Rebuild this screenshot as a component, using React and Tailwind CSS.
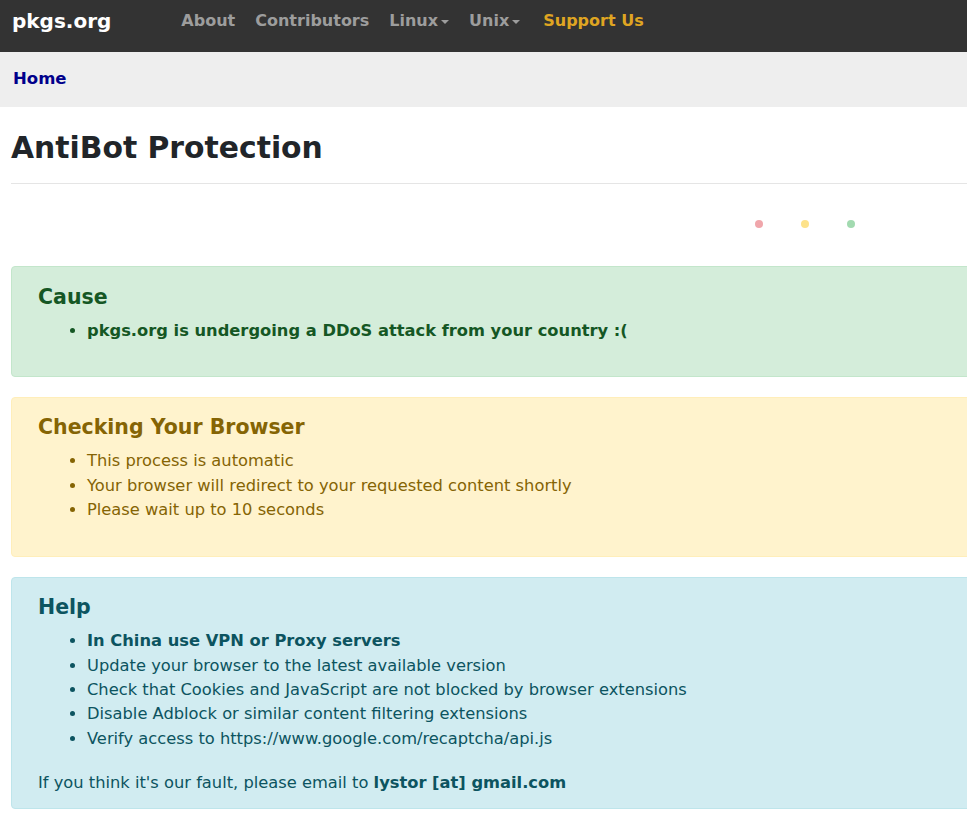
import React from "react";

const font = { fontFamily: '"DejaVu Sans", Verdana, Tahoma, sans-serif' };

function Caret() {
  return <span className="ml-[3px] inline-block border-x-[4px] border-t-[4px] border-x-transparent border-t-current align-middle" />;
}

function Dots() {
  return (
    <div className="flex h-[82px] items-center gap-[38px] pb-[2px] pl-[744px]">
      <span className="h-[8px] w-[8px] rounded-full bg-[#f0a6ab]" />
      <span className="h-[8px] w-[8px] rounded-full bg-[#fde28a]" />
      <span className="h-[8px] w-[8px] rounded-full bg-[#a2dab0]" />
    </div>
  );
}

export default function App() {
  return (
    <div className="min-h-screen w-full overflow-hidden bg-white text-[16.3px] leading-[24.4px]" style={font}>
      <nav className="flex h-[52px] items-center bg-[#333333] px-[12px] pb-[9px] font-bold">
        <span className="text-[20px] text-white">pkgs.org</span>
        <div className="ml-[70px] flex items-center gap-[20px] text-[16px] text-[#9d9d9d]">
          <span>About</span>
          <span>Contributors</span>
          <span className="flex items-center">Linux<Caret /></span>
          <span className="flex items-center">Unix<Caret /></span>
          <span className="ml-[3px] text-[#dfa522]">Support Us</span>
        </div>
      </nav>

      <div className="flex h-[55px] items-center bg-[#eeeeee] px-[13px]">
        <span className="text-[16.5px] font-bold text-[#00008b]">Home</span>
      </div>

      <main className="w-[1200px] px-[11px]">
        <h1 className="mt-[23px] pb-[17px] text-[29.8px] font-bold leading-[1.2] text-[#212529]">AntiBot Protection</h1>
        <hr className="border-t border-[#e5e5e5]" />
        <Dots />

        <section className="mb-[20px] rounded-[4px] border border-[#c3e6cb] bg-[#d4edda] px-[26px] pb-[15px] pt-[18px] text-[#155724]">
          <h4 className="mb-[10px] text-[20.5px] font-bold leading-[1.2]">Cause</h4>
          <ul className="mb-[17px] list-disc pl-[49px] font-bold">
            <li>pkgs.org is undergoing a DDoS attack from your country :(</li>
          </ul>
        </section>

        <section className="mb-[20px] rounded-[4px] border border-[#ffeeba] bg-[#fff3cd] px-[26px] pb-[15px] pt-[17px] text-[#856404]">
          <h4 className="mb-[10px] text-[20.5px] font-bold leading-[1.2]">Checking Your Browser</h4>
          <ul className="mb-[18px] list-disc pl-[49px]">
            <li>This process is automatic</li>
            <li>Your browser will redirect to your requested content shortly</li>
            <li>Please wait up to 10 seconds</li>
          </ul>
        </section>

        <section className="mb-[20px] rounded-[4px] border border-[#bee5eb] bg-[#d1ecf1] px-[26px] pb-[12px] pt-[17px] text-[#0c5460]">
          <h4 className="mb-[10px] text-[20.5px] font-bold leading-[1.2]">Help</h4>
          <ul className="mb-[20px] list-disc pl-[49px]">
            <li className="font-bold">In China use VPN or Proxy servers</li>
            <li>Update your browser to the latest available version</li>
            <li>Check that Cookies and JavaScript are not blocked by browser extensions</li>
            <li>Disable Adblock or similar content filtering extensions</li>
            <li>Verify access to https://www.google.com/recaptcha/api.js</li>
          </ul>
          <p>
            If you think it's our fault, please email to <b>lystor [at] gmail.com</b>
          </p>
        </section>
      </main>
    </div>
  );
}
